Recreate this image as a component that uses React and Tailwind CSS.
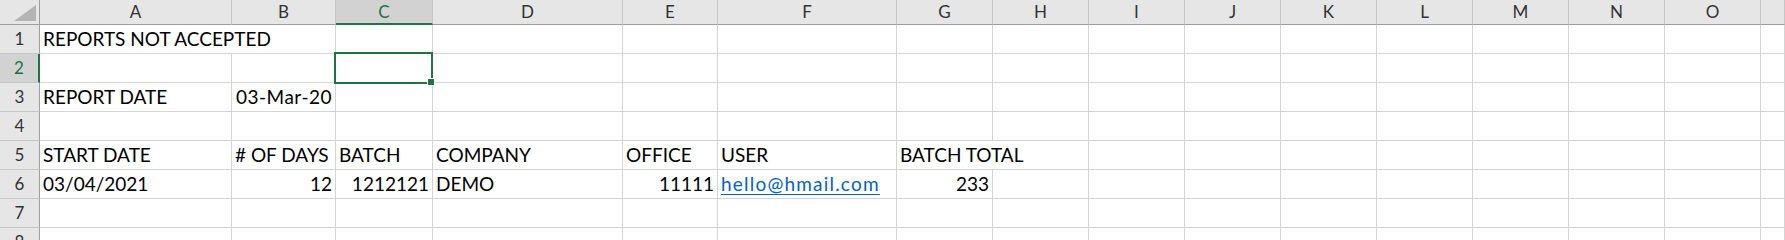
import React from "react";

const COLS = ["A","B","C","D","E","F","G","H","I","J","K","L","M","N","O","P"];

const ROWS = [
  [{ c: 0, t: "REPORTS NOT ACCEPTED", span: 2 }],
  [],
  [{ c: 0, t: "REPORT DATE" }, { c: 1, t: "03-Mar-20", r: true, track: "tracking-[0.5px]" }],
  [],
  [
    { c: 0, t: "START DATE" },
    { c: 1, t: "# OF DAYS" },
    { c: 2, t: "BATCH" },
    { c: 3, t: "COMPANY" },
    { c: 4, t: "OFFICE" },
    { c: 5, t: "USER" },
    { c: 6, t: "BATCH TOTAL", span: 2 },
  ],
  [
    { c: 0, t: "03/04/2021" },
    { c: 1, t: "12", r: true },
    { c: 2, t: "1212121", r: true },
    { c: 3, t: "DEMO" },
    { c: 4, t: "11111", r: true },
    { c: 5, t: "hello@hmail.com", link: true },
    { c: 6, t: "233", r: true },
  ],
  [],
  [],
];

function Row({ idx, cells }) {
  const out = [];
  const selRow = idx === 1;
  out.push(
    <div
      key="h"
      className={
        "flex items-start justify-center border-b border-b-[#c6c6c6] text-[17px] leading-[28px] " +
        (selRow
          ? "bg-[#d2d2d2] text-[#217346] border-r-2 border-r-[#217346]"
          : "bg-[#e6e6e6] text-[#333333] border-r border-r-[#9e9e9e]")
      }
    >
      {idx + 1}
    </div>
  );
  let c = 0;
  while (c < COLS.length) {
    const cell = cells.find((x) => x.c === c);
    const span = cell && cell.span ? cell.span : 1;
    out.push(
      <div
        key={c}
        className={
          "overflow-hidden whitespace-nowrap border-r border-b border-[#d4d4d4] bg-white px-[3px] text-[19px] leading-[28px] text-black " +
          (span === 2 ? "col-span-2 " : "") +
          (cell && cell.r ? "text-right " : "text-left ") +
          (cell && cell.track ? cell.track : "")
        }
      >
        {cell ? (
          cell.link ? (
            <span className="text-[#0563c1] underline underline-offset-[3px] tracking-[1.2px]">{cell.t}</span>
          ) : (
            cell.t
          )
        ) : null}
      </div>
    );
    c += span;
  }
  return out;
}

export default function App() {
  return (
    <div className="h-[240px] w-full overflow-hidden bg-white font-[Lato,sans-serif]">
      <div className="relative grid w-full grid-cols-[40px_192px_104px_97px_190px_95px_179px_96px_96px_96px_96px_96px_96px_96px_96px_96px_1fr] grid-rows-[25px_repeat(8,29px)]">
        {/* corner */}
        <div className="relative border-r border-b border-r-[#9e9e9e] border-b-[#9e9e9e] bg-[#e6e6e6]">
          <svg className="absolute left-[14px] top-[5px]" width="22" height="16" viewBox="0 0 22 16">
            <polygon points="22,0 22,16 0,16" fill="#b4b4b4" />
          </svg>
        </div>
        {COLS.map((l) => {
          const sel = l === "C";
          return (
            <div
              key={l}
              className={
                "flex justify-center border-r border-r-[#c6c6c6] text-[17px] leading-[24px] " +
                (sel
                  ? "bg-[#d2d2d2] text-[#217346] border-b-2 border-b-[#217346]"
                  : "bg-[#e6e6e6] text-[#333333] border-b border-b-[#9e9e9e]")
              }
            >
              {l === "P" ? "" : l}
            </div>
          );
        })}
        {ROWS.map((cells, i) => (
          <Row key={i} idx={i} cells={cells} />
        ))}
        {/* selection box on C2 */}
        <div className="pointer-events-none absolute left-[334px] top-[52px] h-[32px] w-[99px] border-2 border-[#217346]" />
        <div className="pointer-events-none absolute left-[427px] top-[78px] h-[8px] w-[8px] border border-white bg-[#217346]" />
      </div>
    </div>
  );
}
